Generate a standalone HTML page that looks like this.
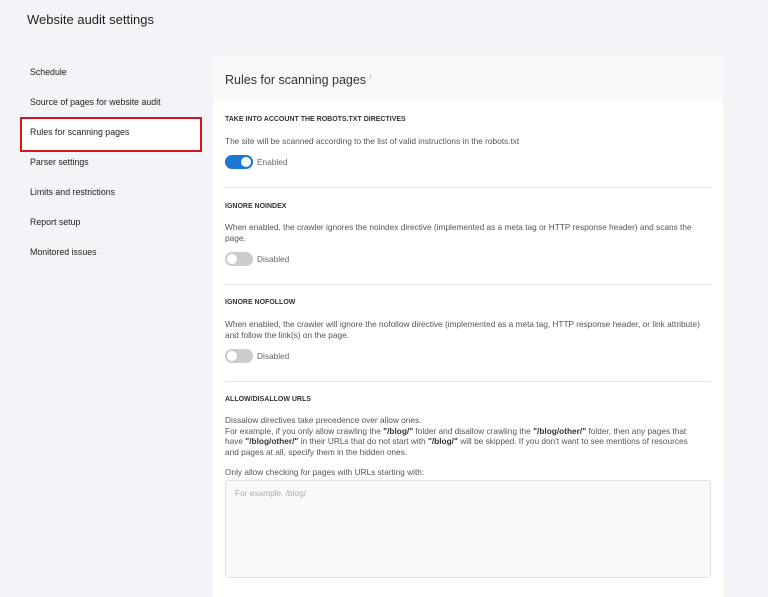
<!DOCTYPE html>
<html><head><meta charset="utf-8"><style>
*{margin:0;padding:0;box-sizing:border-box}
body{width:768px;height:585px;background:#f3f4f7;font-family:"Liberation Sans",sans-serif;color:#2b2b2b;position:relative;overflow:hidden}
.a{position:absolute;white-space:nowrap}
.nav{left:30px;font-size:8.8px;color:#222}
.panel{position:absolute;left:213px;top:57px;width:510px;height:540px;background:#fff}
.ph{position:absolute;left:0;top:0;width:510px;height:45px;background:#f8f9fb}
.h{font-size:7px;font-weight:bold;color:#333;left:12px}
.t{font-size:8.3px;color:#555;left:12px;line-height:10.5px;white-space:normal;width:480px}
.hr{position:absolute;left:12px;width:486px;height:1px;background:#e3e4e8}
.tg{position:absolute;left:12px;width:28px;height:14px;border-radius:7px}
.tg i{position:absolute;top:2px;width:10px;height:10px;border-radius:50%;background:#fff}
.lb{font-size:8.3px;color:#666;left:44px}
b{color:#333}
</style></head><body>
<div class="a" style="left:27px;top:12px;font-size:13px;color:#222">Website audit settings</div>
<div class="a nav" style="top:67px">Schedule</div>
<div class="a nav" style="top:97px">Source of pages for website audit</div>
<div style="position:absolute;left:20px;top:117px;width:182px;height:35px;background:#fff;border:2px solid #d9141a"></div>
<div class="a nav" style="top:127px">Rules for scanning pages</div>
<div class="a nav" style="top:157px">Parser settings</div>
<div class="a nav" style="top:187px">Limits and restrictions</div>
<div class="a nav" style="top:217px">Report setup</div>
<div class="a nav" style="top:247px">Monitored issues</div>
<div class="panel">
<div class="ph"></div>
<div class="a" style="left:12px;top:16px;font-size:12.5px;color:#333">Rules for scanning pages <sup style="font-size:6px;color:#888"><i>i</i></sup></div>
<div class="a h" style="top:59px">TAKE INTO ACCOUNT THE ROBOTS.TXT DIRECTIVES</div>
<div class="a t" style="top:79px">The site will be scanned according to the list of valid instructions in the robots.txt</div>
<div class="tg" style="top:98px;background:#1c77d2"><i style="right:2px"></i></div>
<div class="a lb" style="top:100px">Enabled</div>
<div class="hr" style="top:130px"></div>
<div class="a h" style="top:146px">IGNORE NOINDEX</div>
<div class="a t" style="top:165px">When enabled, the crawler ignores the noindex directive (implemented as a meta tag or HTTP response header) and scans the page.</div>
<div class="tg" style="top:195px;background:#ccc"><i style="left:2px"></i></div>
<div class="a lb" style="top:197px">Disabled</div>
<div class="hr" style="top:227px"></div>
<div class="a h" style="top:242px">IGNORE NOFOLLOW</div>
<div class="a t" style="top:262px">When enabled, the crawler will ignore the nofollow directive (implemented as a meta tag, HTTP response header, or link attribute) and follow the link(s) on the page.</div>
<div class="tg" style="top:292px;background:#ccc"><i style="left:2px"></i></div>
<div class="a lb" style="top:294px">Disabled</div>
<div class="hr" style="top:324px"></div>
<div class="a h" style="top:339px">ALLOW/DISALLOW URLS</div>
<div class="a t" style="top:358px;width:486px">Dissalow directives take precedence over allow ones.<br>For example, if you only allow crawling the <b>"/blog/"</b> folder and disallow crawling the <b>"/blog/other/"</b> folder, then any pages that<br>have <b>"/blog/other/"</b> in their URLs that do not start with <b>"/blog/"</b> will be skipped. If you don't want to see mentions of resources<br>and pages at all, specify them in the hidden ones.</div>
<div class="a t" style="top:410px">Only allow checking for pages with URLs starting with:</div>
<div style="position:absolute;left:12px;top:423px;width:486px;height:98px;background:#f8f9fb;border:1px solid #e0e2e6;border-radius:3px"></div>
<div class="a" style="left:22px;top:431px;font-size:8.3px;color:#aaa">For example, /blog/</div>
</div>
</body></html>
